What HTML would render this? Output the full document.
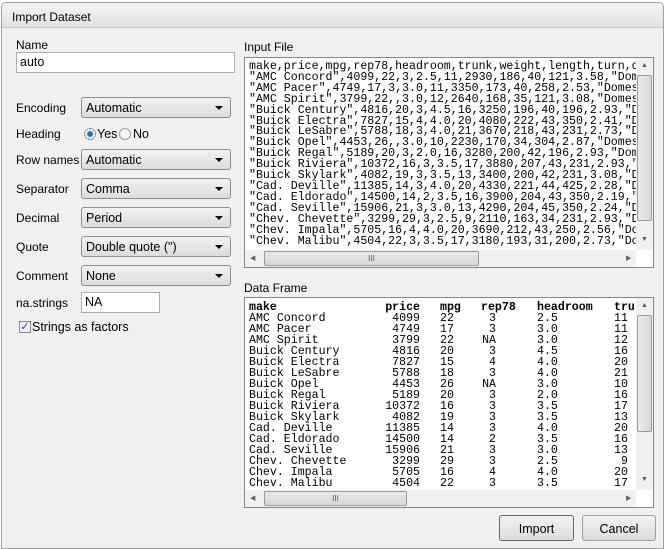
<!DOCTYPE html>
<html><head><style>
*{box-sizing:border-box;margin:0;padding:0}
body{width:668px;height:549px;background:#fff;font-family:"Liberation Sans",sans-serif;font-size:12px;color:#000;position:relative;overflow:hidden}
.win{position:absolute;left:1px;top:2px;width:663px;height:547px;border:1px solid #a0a0a0;border-radius:5px 5px 0 0;background:#f0f0f0;overflow:hidden}
.title{position:absolute;left:0;top:0;right:0;height:25px;background:linear-gradient(#f4f4f4,#e2e2e2);border-bottom:1px solid #c8c8c8;padding:7px 0 0 10px;font-size:12px}
.a{position:absolute}
.lbl{position:absolute;left:16px;font-size:12px}
.sel{position:absolute;left:81px;width:150px;height:21px;border:1px solid #8e8e8e;border-radius:3px;background:linear-gradient(#f2f2f2,#dcdcdc);padding:3px 0 0 4px;font-size:12.5px}
.sel:after{content:"";position:absolute;right:7px;top:8px;border-left:4px solid transparent;border-right:4px solid transparent;border-top:4px solid #000}
.inp{position:absolute;background:#fff;border:1px solid #abadb3;padding:2px 0 0 3px;font-size:12.5px}
.box{position:absolute;left:244px;width:410px;height:211px;border:1px solid #828790;background:#fff;overflow:hidden}
pre{font-family:"Liberation Mono",monospace;font-size:11.6px;line-height:10.9px;position:absolute;left:4px;top:4px;white-space:pre}
.vs{position:absolute;right:0;top:0;width:17px;height:193px;background:#f0f0f0}
.hs{position:absolute;left:0;bottom:0;width:393px;height:17px;background:#f0f0f0}
.thumbv{position:absolute;left:1px;width:15px;background:linear-gradient(90deg,#eaeaea,#d8d8d8);border:1px solid #9a9a9a;border-radius:2px}
.thumbh{position:absolute;top:1px;height:15px;background:linear-gradient(#eaeaea,#d8d8d8);border:1px solid #9a9a9a;border-radius:2px;text-align:center;font-size:8px;line-height:13px;color:#555}
.df{position:absolute;font-family:"Liberation Mono",monospace;font-size:11.6px;line-height:11px;white-space:pre}
.btn{position:absolute;top:515px;height:26px;border:1px solid #707070;border-radius:3px;background:linear-gradient(#f2f2f2,#dddddd);text-align:center;padding-top:6px;font-size:12.5px}
.ar{position:absolute;font-size:7px;color:#606060}
</style></head><body>
<div class="win">
<div class="title">Import Dataset</div>
</div>
<div class="lbl" style="top:38px">Name</div>
<div class="inp" style="left:16px;top:52px;width:219px;height:21px">auto</div>
<div class="lbl" style="top:101px">Encoding</div><div class="sel" style="top:97px">Automatic</div>
<div class="lbl" style="top:127px">Heading</div>
<div class="a" style="left:84px;top:128px;width:12px;height:12px;border-radius:50%;border:1px dotted #333;background:radial-gradient(#1d6fb8 30%,#bcd 45%,#fff 60%)"></div>
<div class="a" style="left:97px;top:127px;font-size:12.5px">Yes</div>
<div class="a" style="left:119px;top:128px;width:12px;height:12px;border-radius:50%;border:1px solid #999;background:#f6f6f6"></div>
<div class="a" style="left:133px;top:127px;font-size:12.5px">No</div>
<div class="lbl" style="top:153px">Row names</div><div class="sel" style="top:149px">Automatic</div>
<div class="lbl" style="top:182px">Separator</div><div class="sel" style="top:178px">Comma</div>
<div class="lbl" style="top:211px">Decimal</div><div class="sel" style="top:207px">Period</div>
<div class="lbl" style="top:240px">Quote</div><div class="sel" style="top:236px">Double quote (")</div>
<div class="lbl" style="top:269px">Comment</div><div class="sel" style="top:265px">None</div>
<div class="lbl" style="top:296px">na.strings</div>
<div class="inp" style="left:81px;top:292px;width:79px;height:21px">NA</div>
<div class="a" style="left:19px;top:321px;width:12px;height:12px;border:1px solid #8a8a8a;background:#eef;color:#2a4a9a;font-size:11px;line-height:10px;text-align:center">✓</div>
<div class="a" style="left:32px;top:320px;font-size:12.5px">Strings as factors</div>

<div class="a" style="left:244px;top:40px">Input File</div>
<div class="box" style="top:57px">
<pre>make,price,mpg,rep78,headroom,trunk,weight,length,turn,d
"AMC Concord",4099,22,3,2.5,11,2930,186,40,121,3.58,"Dom
"AMC Pacer",4749,17,3,3.0,11,3350,173,40,258,2.53,"Domes
"AMC Spirit",3799,22,,3.0,12,2640,168,35,121,3.08,"Domes
"Buick Century",4816,20,3,4.5,16,3250,196,40,196,2.93,"D
"Buick Electra",7827,15,4,4.0,20,4080,222,43,350,2.41,"D
"Buick LeSabre",5788,18,3,4.0,21,3670,218,43,231,2.73,"D
"Buick Opel",4453,26,,3.0,10,2230,170,34,304,2.87,"Domes
"Buick Regal",5189,20,3,2.0,16,3280,200,42,196,2.93,"Dom
"Buick Riviera",10372,16,3,3.5,17,3880,207,43,231,2.93,"
"Buick Skylark",4082,19,3,3.5,13,3400,200,42,231,3.08,"D
"Cad. Deville",11385,14,3,4.0,20,4330,221,44,425,2.28,"D
"Cad. Eldorado",14500,14,2,3.5,16,3900,204,43,350,2.19,"
"Cad. Seville",15906,21,3,3.0,13,4290,204,45,350,2.24,"D
"Chev. Chevette",3299,29,3,2.5,9,2110,163,34,231,2.93,"D
"Chev. Impala",5705,16,4,4.0,20,3690,212,43,250,2.56,"Do
"Chev. Malibu",4504,22,3,3.5,17,3180,193,31,200,2.73,"Do</pre>
<div class="vs" style="background:#f0f0f0"><span class="ar" style="left:5px;top:4px">▲</span><div class="thumbv" style="top:17px;height:146px"></div><span class="ar" style="left:5px;top:178px">▼</span></div>
<div class="hs"><span class="ar" style="left:5px;top:4px">◀</span><div class="thumbh" style="left:19px;width:215px">III</div><span class="ar" style="left:381px;top:4px">▶</span></div>
<div class="a" style="right:0;bottom:0;width:17px;height:17px;background:#fff"></div>
</div>

<div class="a" style="left:244px;top:281px">Data Frame</div>
<div class="box" style="top:297px;height:211px">
<div class="vs"><span class="ar" style="left:5px;top:4px">▲</span><div class="thumbv" style="top:17px;height:117px"></div><span class="ar" style="left:5px;top:178px">▼</span></div>
<div class="hs"><span class="ar" style="left:5px;top:4px">◀</span><div class="thumbh" style="left:19px;width:143px">III</div><span class="ar" style="left:381px;top:4px">▶</span></div>
<div class="a" style="right:0;bottom:0;width:17px;height:17px;background:#fff"></div>
</div>
<div class="df" style="left:249px;top:302px"><b>make</b>
AMC Concord
AMC Pacer
AMC Spirit
Buick Century
Buick Electra
Buick LeSabre
Buick Opel
Buick Regal
Buick Riviera
Buick Skylark
Cad. Deville
Cad. Eldorado
Cad. Seville
Chev. Chevette
Chev. Impala
Chev. Malibu</div>
<div class="df" style="left:383px;top:302px;text-align:right;width:37px"><b>price</b>
4099
4749
3799
4816
7827
5788
4453
5189
10372
4082
11385
14500
15906
3299
5705
4504</div>
<div class="df" style="left:440px;top:302px"><b>mpg</b>
22
17
22
20
15
18
26
20
16
19
14
14
21
29
16
22</div>
<div class="df" style="left:481px;top:302px;text-align:right;width:15px"><b>rep78</b>
3
3
NA
3
4
3
NA
3
3
3
3
2
3
3
4
3</div>
<div class="df" style="left:537px;top:302px"><b>headroom</b>
2.5
3.0
3.0
4.5
4.0
4.0
3.0
2.0
3.5
3.5
4.0
3.5
3.0
2.5
4.0
3.5</div>
<div class="df" style="left:614px;top:302px;width:23px;overflow:hidden;height:186px"><b>tru</b>
11
11
12
16
20
21
10
16
17
13
20
16
13
 9
20
17</div>

<div class="btn" style="left:499px;width:75px;border-color:#5a6a7a">Import</div>
<div class="btn" style="left:582px;width:74px;border-color:#a0a0a0">Cancel</div>
</body></html>
